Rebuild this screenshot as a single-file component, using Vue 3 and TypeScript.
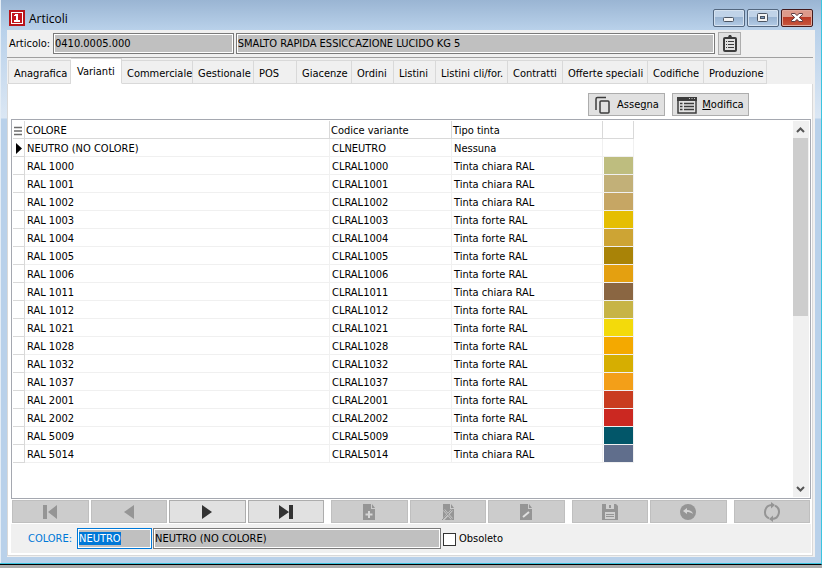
<script setup lang="ts">
import { nextTick, onMounted, ref } from 'vue'

interface Variant {
  name: string
  code: string
  tint: string
  color: string
}

const tabs: string[] = [
  'Anagrafica', 'Varianti', 'Commerciale', 'Gestionale', 'POS', 'Giacenze', 'Ordini',
  'Listini', 'Listini cli/for.', 'Contratti', 'Offerte speciali', 'Codifiche', 'Produzione',
]
const activeTab = ref('Varianti')

const ral = (n: number, strength: string, color: string): Variant => ({
  name: `RAL ${n}`,
  code: `CLRAL${n}`,
  tint: `Tinta ${strength} RAL`,
  color,
})

const variants: Variant[] = [
  { name: 'NEUTRO (NO COLORE)', code: 'CLNEUTRO', tint: 'Nessuna', color: '' },
  ral(1000, 'chiara', '#bebd7f'),
  ral(1001, 'chiara', '#c2b078'),
  ral(1002, 'chiara', '#c6a664'),
  ral(1003, 'forte', '#e5be01'),
  ral(1004, 'forte', '#cda434'),
  ral(1005, 'forte', '#a98307'),
  ral(1006, 'forte', '#e4a010'),
  ral(1011, 'chiara', '#8a6642'),
  ral(1012, 'forte', '#c7b446'),
  ral(1021, 'forte', '#f3da0b'),
  ral(1028, 'forte', '#f4a900'),
  ral(1032, 'forte', '#d6ae01'),
  ral(1037, 'forte', '#f39f18'),
  ral(2001, 'forte', '#c93c20'),
  ral(2002, 'forte', '#cb2821'),
  ral(5009, 'chiara', '#025669'),
  ral(5014, 'chiara', '#606e8c'),
]
const current = ref(0)

const articleCode = ref('0410.0005.000')
const articleName = ref('SMALTO RAPIDA ESSICCAZIONE LUCIDO KG 5')
const colorCode = ref('NEUTRO')
const colorName = ref('NEUTRO (NO COLORE)')
const obsolete = ref(false)

const colorInput = ref<HTMLInputElement | null>(null)
onMounted(async () => {
  await nextTick()
  colorInput.value?.focus()
  colorInput.value?.select()
})
</script>

<template>
  <div class="window">
    <header class="titlebar">
      <svg class="logo" viewBox="0 0 16 16" aria-hidden="true">
        <rect width="16" height="16" fill="#b8141a" />
        <rect x="2.5" y="2.5" width="11" height="11" fill="#c3151c" stroke="#fff" />
        <path d="M6 4h3v6h2v2H5v-2h2V6H5V5h1z" fill="#fff" />
      </svg>
      <h1>Articoli</h1>
      <div class="window-buttons">
        <button type="button" aria-label="Riduci">
          <svg viewBox="0 0 32 18"><rect x="10.5" y="8.5" width="10" height="4" rx="1" fill="#f4f4f4" stroke="#4b5563" /></svg>
        </button>
        <button type="button" aria-label="Ingrandisci">
          <svg viewBox="0 0 32 18"><rect x="10.5" y="4.5" width="10" height="8" rx="1" fill="#f4f4f4" stroke="#4b5563" /><rect x="13.5" y="7.5" width="4" height="2" fill="#7d9cc0" stroke="#4b5563" /></svg>
        </button>
        <button type="button" class="close" aria-label="Chiudi">
          <svg viewBox="0 0 32 18"><path d="M10.5 4.5h3.4l2.100 2 2.100-2h3.400v1.200l-3.200 2.800 3.200 2.800v1.200h-3.400l-2.100-2-2.100 2h-3.400v-1.200l3.200-2.800-3.200-2.800z" fill="#fff" stroke="#5b3a3f" /></svg>
        </button>
      </div>
    </header>

    <main class="client">
      <div class="article">
        <label for="article-code">Articolo:</label>
        <input id="article-code" v-model="articleCode" class="field article-code" readonly />
        <input v-model="articleName" class="field article-name" aria-label="Descrizione articolo" readonly />
        <button type="button" class="tool" aria-label="Appunti">
          <svg viewBox="0 0 14 17" width="14" height="17" fill="none" stroke="#3c3c3c">
            <rect x="1" y="3" width="12" height="13" rx="1" stroke-width="2" />
            <path d="M3 4V2h2l1-2h2l1 2h2v2z" fill="#3c3c3c" stroke="none" />
            <path d="M3 6.500h1M3 9.500h1M3 12.500h1M5 6.500h6M5 9.500h6M5 12.500h6" />
          </svg>
        </button>
      </div>

      <nav class="tabs" role="tablist">
        <button
          v-for="tab in tabs"
          :key="tab"
          type="button"
          role="tab"
          :class="{ active: tab === activeTab }"
          :aria-selected="tab === activeTab"
          @click="activeTab = tab"
        >{{ tab }}</button>
      </nav>

      <section class="page">
        <div class="actions">
          <button type="button">
            <svg viewBox="0 0 18 18" width="18" height="18" fill="none" stroke="#3c3c3c">
              <path d="M2 14V3a1.500 1.500 0 0 1 1.500-1.500H12" stroke-width="1.500" />
              <rect x="6" y="5" width="9" height="12" rx="1" stroke-width="1.500" />
            </svg>
            <span>Asse<u>g</u>na</span>
          </button>
          <button type="button">
            <svg viewBox="0 0 20 18" width="20" height="18" fill="none" stroke="#3c3c3c">
              <rect x="1" y="2" width="18" height="15" stroke-width="1.500" />
              <path d="M0 3h20" stroke-width="4" />
              <path d="M12 2.500h1M14.500 2.500h1M17 2.500h1" stroke="#c8c8c8" />
              <path d="M3 7.500h2.500M3 10.500h2.500M3 13.500h2.500M7 7.500h10M7 10.500h10M7 13.500h10" stroke-width="1.500" />
            </svg>
            <span><u>M</u>odifica</span>
          </button>
        </div>

        <div class="grid">
          <div class="rows">
            <table>
              <colgroup>
                <col class="c-mark" /><col class="c-name" /><col class="c-code" /><col class="c-tint" /><col class="c-color" />
              </colgroup>
              <thead>
                <tr>
                  <th><svg viewBox="0 0 8 10" width="8" height="10" aria-hidden="true"><path d="M0 1.500h8M0 5h8M0 8.500h8" stroke="#6c6c6c" stroke-width="1.500" /></svg></th>
                  <th>COLORE</th>
                  <th>Codice variante</th>
                  <th>Tipo tinta</th>
                  <th></th>
                </tr>
              </thead>
              <tbody>
                <tr v-for="(row, i) in variants" :key="row.code" @click="current = i">
                  <td class="mark"><svg v-if="i === current" viewBox="0 0 6 11" width="6" height="11"><path d="M0 0l6 5.500L0 11z" fill="#000" /></svg></td>
                  <td>{{ row.name }}</td>
                  <td>{{ row.code }}</td>
                  <td>{{ row.tint }}</td>
                  <td class="swatch"><span v-if="row.color" :style="{ background: row.color }"></span></td>
                </tr>
              </tbody>
            </table>
          </div>
          <div class="scrollbar">
            <button type="button" aria-label="Su"><svg viewBox="0 0 9 6" width="9" height="6"><path d="M1 5l3.500-3.500L8 5" fill="none" stroke="#555" stroke-width="2" /></svg></button>
            <div class="track"><div class="thumb"></div></div>
            <button type="button" aria-label="Giù"><svg viewBox="0 0 9 6" width="9" height="6"><path d="M1 1l3.500 3.500L8 1" fill="none" stroke="#555" stroke-width="2" /></svg></button>
          </div>
        </div>

        <div class="navigator">
          <div class="group four">
            <button type="button" disabled aria-label="Primo"><svg viewBox="0 0 16 16"><path d="M1 1h4v14H1zM15 1v14L6 8z" /></svg></button>
            <button type="button" disabled aria-label="Precedente"><svg viewBox="0 0 16 16"><path d="M13 1v14L3 8z" /></svg></button>
            <button type="button" aria-label="Successivo"><svg viewBox="0 0 16 16"><path d="M3 1v14l10-7z" /></svg></button>
            <button type="button" aria-label="Ultimo"><svg viewBox="0 0 16 16"><path d="M1 1v14l10-7zM11 1h4v14h-4z" /></svg></button>
          </div>
          <div class="group three">
            <button type="button" disabled aria-label="Nuovo"><svg viewBox="0 0 16 16"><path d="M2 0h8v5h4v11H2zM11 0l3 4h-3z" /><path d="M8 7v7M4.500 10.500h7" stroke="#d6d6d6" stroke-width="2" /></svg></button>
            <button type="button" disabled aria-label="Elimina"><svg viewBox="0 0 16 16"><path d="M3 0h7v5h4v11H3zM11 0l3 4h-3z" /><path d="M4 6l8 9M12 6l-9 10" fill="none" stroke="#c4c4c4" stroke-width="2.500" /><path d="M4 6l8 9M12 6l-10 10" fill="none" stroke="#959595" /></svg></button>
            <button type="button" disabled aria-label="Modifica"><svg viewBox="0 0 16 16"><path d="M2 0h8v5h4v11H2zM11 0l3 4h-3z" /><path d="M5 13l6-5" stroke="#e0e0e0" stroke-width="2" /></svg></button>
          </div>
          <div class="group two">
            <button type="button" disabled aria-label="Salva"><svg viewBox="0 0 16 16"><path d="M0 0h14l2 2v14H0z" /><path d="M4 0h8v5H4zM3 8h10v7H3z" fill="#d0d0d0" /><path d="M7 1h2v3H7zM4 10h8v1H4zM4 12h8v1H4z" /></svg></button>
            <button type="button" disabled aria-label="Annulla"><svg viewBox="0 0 16 16"><circle cx="8" cy="8" r="8" /><path d="M3 7l4-3v2c3 0 5 1 6 4-2-1.500-4-2-6-2v2z" fill="#d6d6d6" /></svg></button>
          </div>
          <div class="group">
            <button type="button" disabled aria-label="Aggiorna"><svg class="refresh" viewBox="0 0 18 18"><path d="M9 2A7 7 0 0 0 6 15.300M9 16A7 7 0 0 0 12 2.700" fill="none" stroke="#959595" stroke-width="2" /><path d="M8 -1l4 3-4 3.500zM10 12.500l-4 3.500 4 3z" /></svg></button>
          </div>
        </div>

        <div class="detail">
          <label for="color-code">COLORE:</label>
          <input id="color-code" ref="colorInput" v-model="colorCode" class="field color-code" />
          <input v-model="colorName" class="field color-name" aria-label="Descrizione colore" readonly />
          <label class="check"><input v-model="obsolete" type="checkbox" /> Obsoleto</label>
        </div>
      </section>
    </main>
  </div>
</template>

<style>
body {
  background: #ababab;
}
</style>

<style scoped>
.window {
  box-sizing: border-box;
  height: calc(100vh - 3px);
  min-height: 520px;
  display: flex;
  flex-direction: column;
  padding: 1px 6px 7px 7px;
  border-right: 1px solid #3cc4e0;
  border-bottom: 1px solid #000;
  box-shadow: inset 0 -1px #3cc4e0, inset 1px 0 #e4edf6;
  background: linear-gradient(#9ab5d3, #b9d1ea 30px, #dbe7f4 118px, #b9d1ea 119px);
  font-family: 'DejaVu Sans Condensed', Tahoma, sans-serif;
  font-size: 11px;
  line-height: 14px;
  color: #000;
}
button,
input {
  box-sizing: border-box;
  margin: 0;
  font: inherit;
  color: inherit;
}
button {
  display: flex;
  align-items: center;
  justify-content: center;
  padding: 0;
  border-radius: 0;
}
svg {
  display: block;
}

.titlebar {
  flex: none;
  display: flex;
  align-items: center;
  height: 29px;
  padding: 5px 2px 0 2px;
  box-sizing: border-box;
}
.logo {
  width: 16px;
  height: 16px;
}
h1 {
  flex: 1;
  margin: 0 0 0 4px;
  padding-top: 1px;
  font: 12px/16px 'Open Sans', 'Segoe UI', sans-serif;
}
.window-buttons {
  display: flex;
  gap: 2px;
}
.window-buttons button {
  width: 32px;
  height: 18px;
  border: 1px solid #53677f;
  border-radius: 2px;
  box-shadow: inset 0 0 0 1px #d5e2f0;
  background: linear-gradient(#c0d3e8 0 45%, #98b3d1 45%, #b4cce6);
}
.window-buttons svg {
  flex: none;
  width: 32px;
  height: 18px;
}
.window-buttons .close {
  border-color: #431a1c;
  box-shadow: inset 0 0 0 1px #e0a99d;
  background: linear-gradient(#dd9a8b 0 45%, #bb3a25 45%, #c8573f);
}

.client {
  flex: 1;
  min-height: 0;
  display: flex;
  flex-direction: column;
  padding: 0 2px 1px 0;
  background: #f0f0f0;
}
.article {
  flex: none;
  display: flex;
  align-items: center;
  gap: 2px;
  height: 28px;
  box-sizing: border-box;
  padding: 0 72px 0 2px;
  border-bottom: 1px solid #a0a0a0;
}
.article label {
  width: 42px;
  padding-top: 1px;
  white-space: nowrap;
}
.field {
  min-width: 0;
  height: 21px;
  padding: 0 0 1px 1px;
  border: 1px solid #7a7a7a;
  border-radius: 0;
  outline: none;
  box-shadow: inset 0 0 0 1px #fff;
  background: #c0c0c0;
}
.article-code {
  flex: 179 1 0;
}
.article-name {
  flex: 480 1 0;
}
.tool {
  flex: none;
  width: 23px;
  height: 23px;
  margin-left: 1px;
  border: 1px solid #adadad;
  background: #e1e1e1;
}

.tabs {
  flex: none;
  display: grid;
  grid-template-columns: 63px 51px 71px 61px 43px 55px 42px 42px 72px 55px 85px 56px 63px;
  align-items: end;
  height: 26px;
  padding-left: 1px;
}
.tabs button {
  height: 24px;
  padding: 3px 0 0 5px;
  justify-content: start;
  border: 1px solid #d9d9d9;
  border-left-width: 0;
  background: #f0f0f0;
  white-space: nowrap;
}
.tabs button:first-child {
  border-left-width: 1px;
}
.tabs .active {
  height: 26px;
  padding-top: 1px;
  padding-left: 6px;
  border-bottom-color: #fff;
  background: #fff;
}

.page {
  flex: 1;
  min-height: 0;
  display: flex;
  flex-direction: column;
  padding: 9px 1px 2px 3px;
  border: 1px solid #d9d9d9;
  border-top: 0;
  background: #fff;
}
.actions {
  display: flex;
  justify-content: flex-end;
  gap: 7px;
  padding: 0 62px 3px 0;
}
.actions button {
  width: 77px;
  height: 23px;
  gap: 5px;
  border: 1px solid #adadad;
  background: #e1e1e1;
}
.actions span {
  padding-top: 1px;
}

.grid {
  flex: 1;
  min-height: 0;
  display: flex;
  padding: 1px;
  border: 1px solid #a5a8b0;
}
.rows {
  flex: 1;
  min-width: 0;
  overflow: hidden;
}
table {
  width: 621px;
  table-layout: fixed;
  border-collapse: separate;
  border-spacing: 0;
}
.c-mark { width: 12px; }
.c-name { width: 305px; }
.c-code { width: 122px; }
.c-tint { width: 151px; }
.c-color { width: 31px; }
th,
td {
  box-sizing: border-box;
  height: 18px;
  padding: 2px 0 0 2px;
  border-right: 1px solid #f0f0f0;
  border-bottom: 1px solid #f0f0f0;
  font-weight: normal;
  text-align: left;
  white-space: nowrap;
}
th {
  padding-left: 1px;
  border-color: #d9d9d9;
}
.mark {
  padding-left: 3px;
  border-color: #d9d9d9;
}
.swatch {
  padding: 0 0 0 1px;
}
.swatch span {
  display: block;
  height: 17px;
}
.scrollbar {
  display: flex;
  flex-direction: column;
  width: 16px;
  background: #f0f0f0;
}
.scrollbar button {
  width: 15px;
  height: 17px;
  border: 0;
  background: none;
}
.track {
  flex: 1;
}
.thumb {
  width: 15px;
  height: 52%;
  background: #cdcdcd;
}

.navigator {
  display: flex;
  gap: 7px;
  padding: 1px;
}
.group {
  flex: 1 1 0;
  display: flex;
  gap: 2px;
}
.two { flex-grow: 2; flex-basis: 2px; }
.three { flex-grow: 3; flex-basis: 4px; }
.four { flex-grow: 4; flex-basis: 6px; }
.navigator button {
  flex: 1;
  height: 23px;
  border: 1px solid #adadad;
  background: #e1e1e1;
}
.navigator button:disabled {
  border-color: #bfbfbf;
  background: #cccccc;
}
.navigator svg {
  width: 16px;
  height: 16px;
  fill: #333;
}
.navigator .refresh {
  width: 18px;
  height: 18px;
  overflow: visible;
}
.navigator button:disabled svg {
  fill: #959595;
}

.detail {
  display: flex;
  align-items: center;
  gap: 1px;
  height: 29px;
  padding-left: 17px;
  background: #f0f0f0;
}
.detail label {
  padding-top: 1px;
}
.detail > label:first-child {
  width: 48px;
  color: #0078d7;
}
.color-code {
  width: 75px;
  border-color: #0078d7;
}
.color-code::selection {
  background: #0078d7;
  color: #fff;
}
.color-name {
  flex: 0 1 288px;
}
.check {
  display: flex;
  align-items: center;
  gap: 3px;
  margin-left: 1px;
}
.check input {
  appearance: none;
  width: 13px;
  height: 13px;
  border: 1px solid #333;
  background: #fff;
}
.check input:checked {
  box-shadow: inset 0 0 0 2px #fff;
  background: #333;
}
</style>
